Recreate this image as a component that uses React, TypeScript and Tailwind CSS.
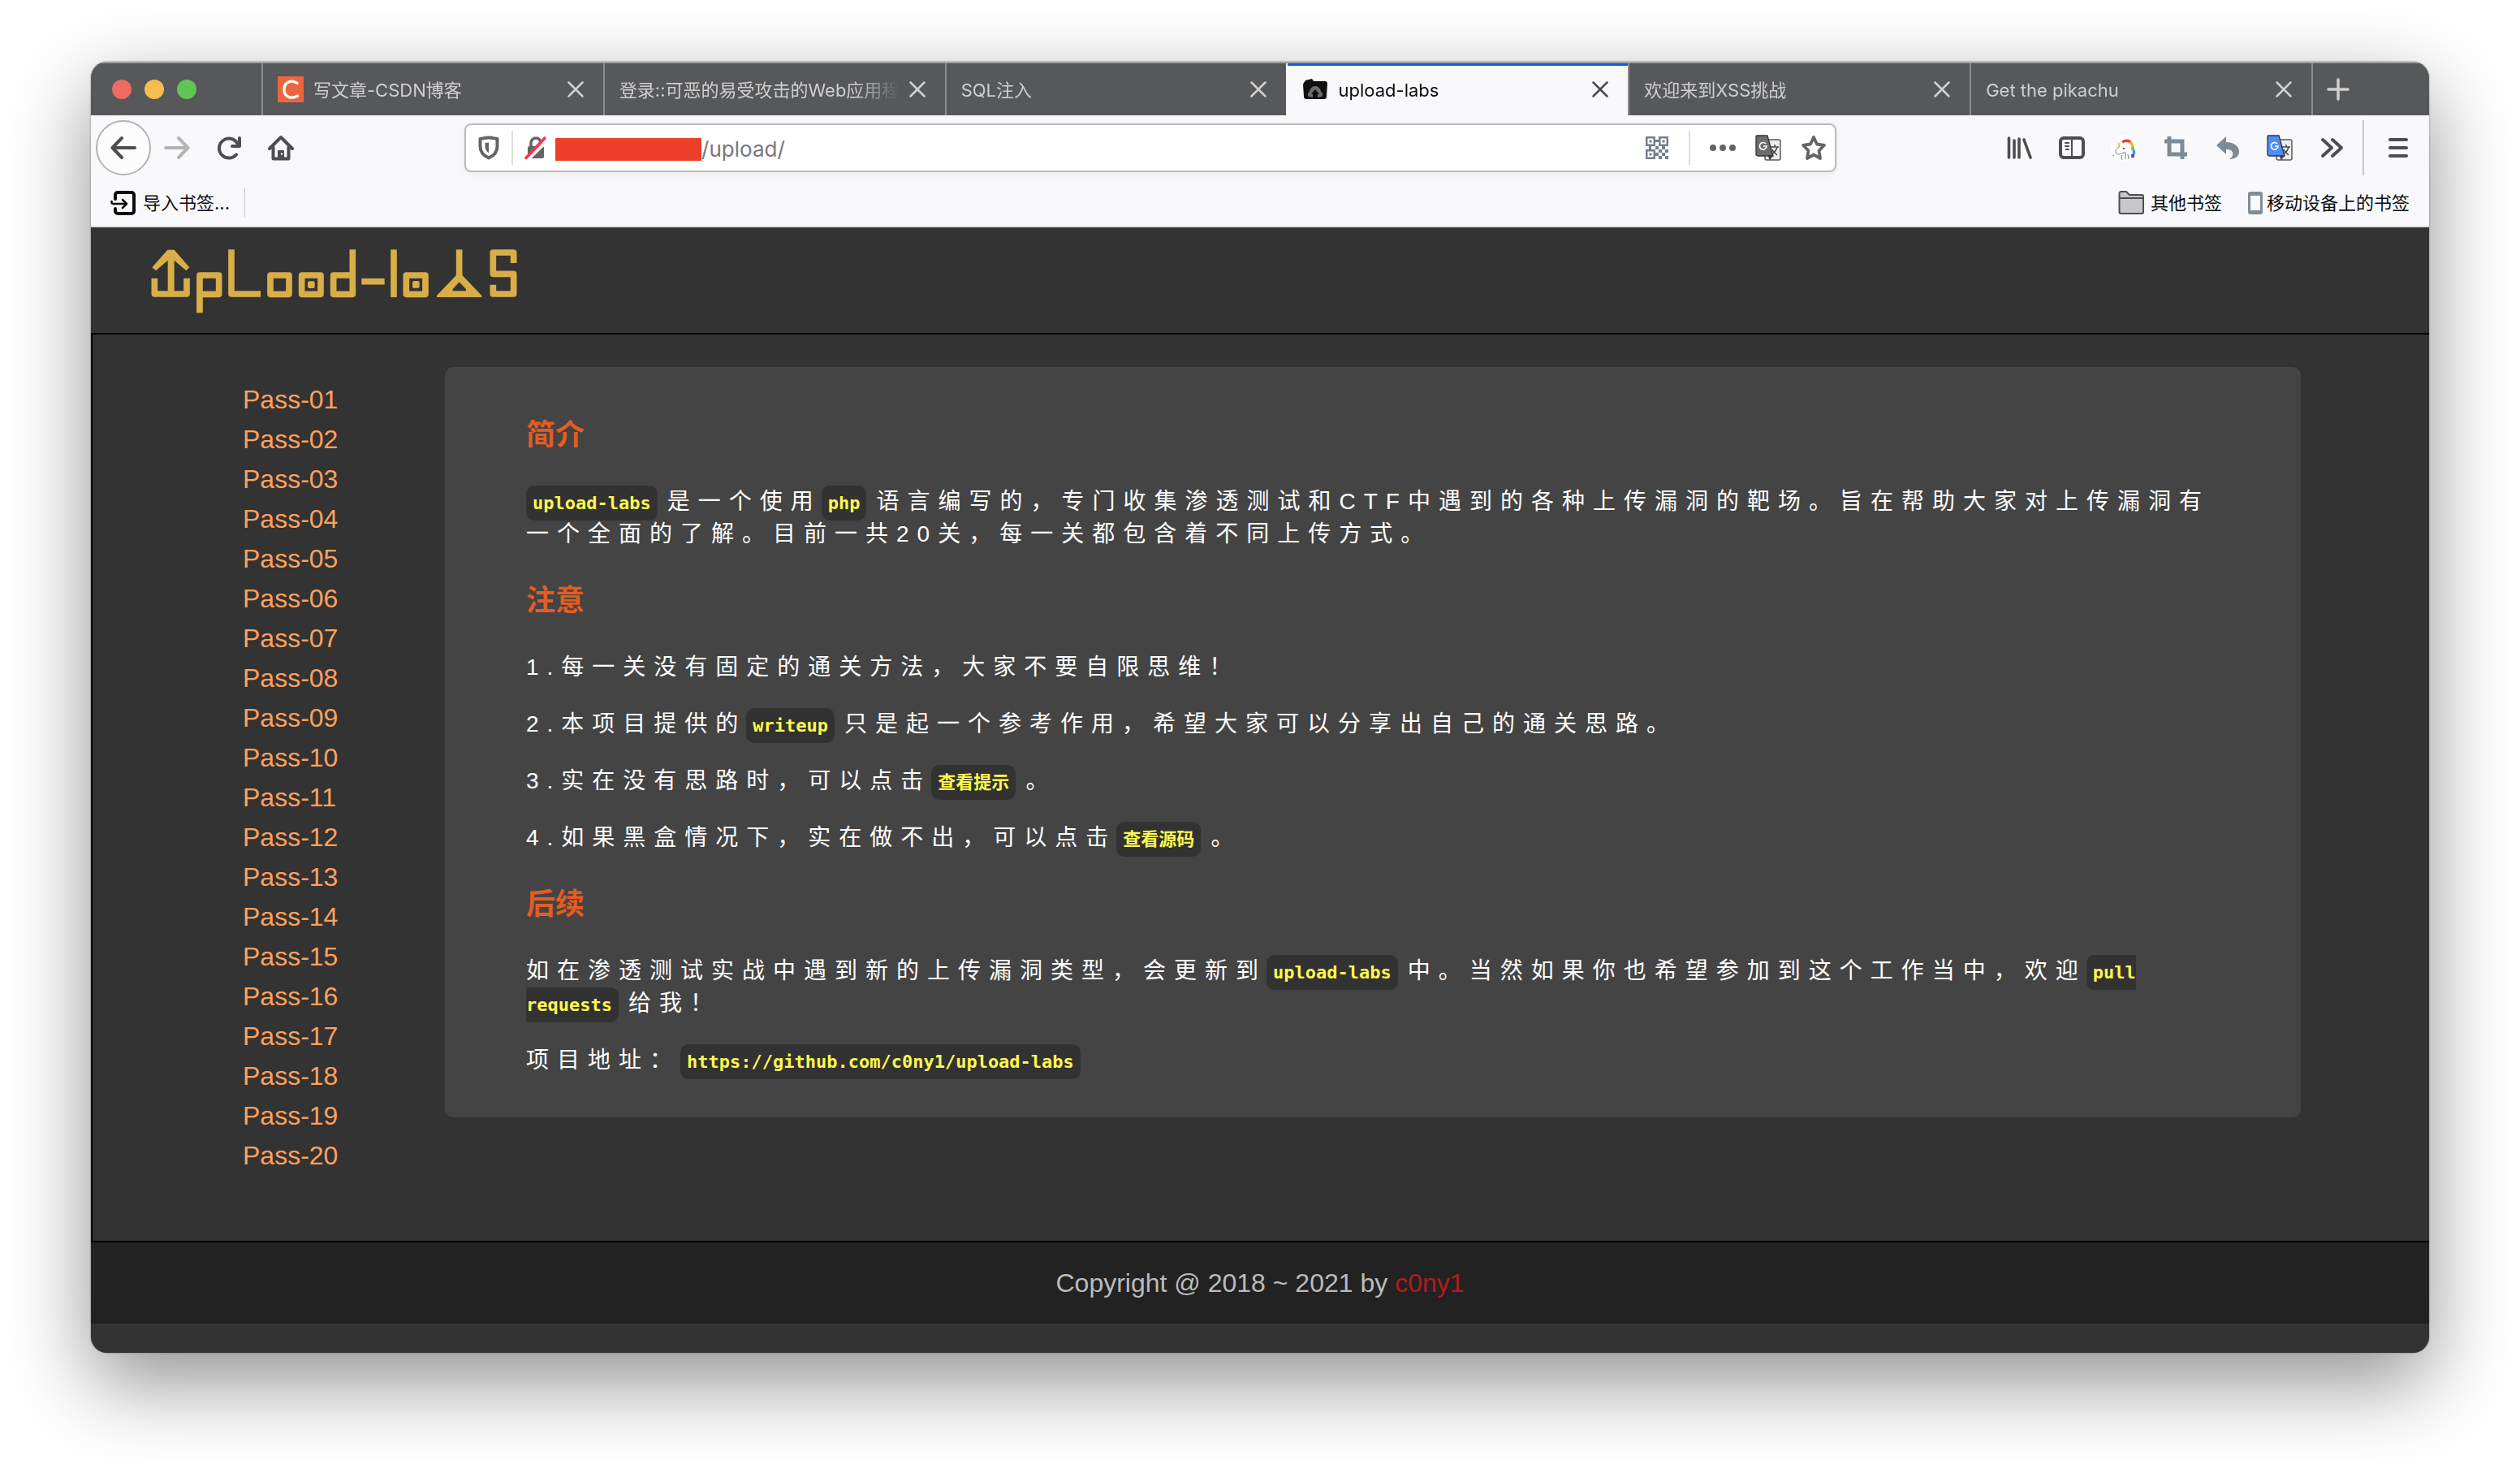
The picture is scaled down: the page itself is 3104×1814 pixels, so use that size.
import type { ReactNode } from 'react'

type Tab = {
  title: string
  icon?: ReactNode
  active?: boolean
}

const passes = Array.from({ length: 20 }, (_, i) => `Pass-${String(i + 1).padStart(2, '0')}`)

const CsdnIcon = () => (
  <svg viewBox="0 0 32 32" className="size-8 shrink-0">
    <rect width="32" height="32" fill="#ec6541" />
    <path d="M24 8.500C17 3.500 8 7 8 16.500c0 9 9 12 16.500 7.500" fill="none" stroke="#fff" strokeWidth="3.400" strokeLinecap="round" />
  </svg>
)

const FolderUploadIcon = () => (
  <svg viewBox="0 0 32 32" className="size-8 shrink-0">
    <path d="M2 8 4 5l8-2 2 3h14a3 3 0 0 1 3 3l-1 16a3 3 0 0 1-3 3H5a3 3 0 0 1-3-3L1 10z" fill="#111" />
    <path d="M8 25c-2-2-1-5 1-6 0-3 3-7 7-7s7 4 7 7c2 1 3 4 1 6l-5 1v-4h2l-5-6-5 6h2v4z" fill="#6d6d6d" />
  </svg>
)

const tabs: Tab[] = [
  { title: '写文章-CSDN博客', icon: <CsdnIcon /> },
  { title: '登录::可恶的易受攻击的Web应用程序' },
  { title: 'SQL注入' },
  { title: 'upload-labs', icon: <FolderUploadIcon />, active: true },
  { title: '欢迎来到XSS挑战' },
  { title: 'Get the pikachu' },
]

type IconProps = {
  children: ReactNode
  className?: string
}

const Icon = ({ children, className = '' }: IconProps) => (
  <svg
    viewBox="0 0 32 32"
    fill="none"
    stroke="currentColor"
    strokeWidth="4"
    strokeLinecap="round"
    strokeLinejoin="round"
    className={`size-8 shrink-0 ${className}`}
  >
    {children}
  </svg>
)

const NavButton = ({ label, children }: { label: string; children: ReactNode }) => (
  <button aria-label={label} className="flex h-16 w-16 shrink-0 items-center justify-center">
    {children}
  </button>
)

const TranslateIcon = ({ front, tail }: { front: string; tail: string }) => (
  <svg viewBox="0 0 32 32" className="size-8 shrink-0">
    <rect x="12" y="6" width="19" height="25" rx="2" fill="#ececec" stroke="#5b5b5d" strokeWidth="1.500" />
    <path d="M19 15h10M24 12v3M27 15c-1 4-3 7-7 9M21 18c1 3 4 5 6 7" fill="none" stroke="#444" strokeWidth="1.500" />
    <path d="M16 25h6l-4 5.500z" fill={tail} stroke="#333" />
    <path d="M2 1h13l7 25H3a2 2 0 0 1-2-2V2a1 1 0 0 1 1-1z" fill={front} stroke="#333" strokeWidth="1.300" />
    <path d="M13 11a4.300 4.300 0 1 0 1 3h-4" fill="none" stroke="#fff" strokeWidth="1.600" />
  </svg>
)

const QrIcon = () => (
  <svg viewBox="0 0 28 28" className="size-7" fill="#74818d">
    <path
      fillRule="evenodd"
      d="M0 0h12v12H0zM2.500 2.500v7h7v-7zM16 0h12v12H16zM18.500 2.500v7h7v-7zM0 16h12v12H0zM2.500 18.500v7h7v-7z"
    />
    <path d="M4.500 4.500h3v3h-3zM20.500 4.500h3v3h-3zM4.500 20.500h3v3h-3zM12 4h4v3h-4zM4 12h3v4H4zM12 12h4v4h-4zM20 12h4v4h-4zM16 16h4v4h-4zM24 16h4v4h-4zM12 20h4v4h-4zM20 20h4v4h-4zM16 24h4v4h-4zM24 24h4v4h-4z" />
  </svg>
)

const UnicornIcon = () => (
  <svg viewBox="0 0 32 32" className="size-8">
    <circle cx="16" cy="16" r="16" fill="#fff" />
    <g fill="none" strokeWidth="3.500">
      <path d="M14 9c4-2 8-2 10 0" stroke="#ee3b2e" />
      <path d="M24 9c2 2 3 3 3 6" stroke="#f5b623" />
      <path d="M27 15v4" stroke="#5ac83c" />
      <path d="M28 19c1 2 1 3 0 5" stroke="#2f9df0" />
      <path d="M27 24v4" stroke="#5a2fc0" />
    </g>
    <path d="m8 9 4 2-2 4z" fill="#f0cf3a" />
    <path d="M11 14c-3 2-6 5-5 8 2 3 6 2 9 0l3 0c1 3-1 5 0 8M14 25c-1 2-1 4 0 6M21 24l1 6M2 25l2 1" fill="none" stroke="#777" />
    <circle cx="16" cy="17" r="1" fill="#222" />
  </svg>
)

const TabBar = () => (
  <div className="flex h-[66px] border-t-2 border-[#9d9e9f] bg-[#57585a]">
    <div className="flex w-[210px] shrink-0 items-center gap-4 pl-[26px]">
      <button aria-label="关闭" className="size-6 rounded-full bg-[#ed6b60]" />
      <button aria-label="最小化" className="size-6 rounded-full bg-[#f6be50]" />
      <button aria-label="缩放" className="size-6 rounded-full bg-[#61c555]" />
    </div>
    <div role="tablist" className="flex min-w-0 flex-1">
      {tabs.map((tab) => (
        <div
          key={tab.title}
          role="tab"
          aria-selected={!!tab.active}
          className={`flex min-w-0 flex-1 basis-0 items-center gap-3 border-l-2 pr-6 pl-[18px] ${
            tab.active
              ? 'border-[#f9f9fb] bg-[#f9f9fb] text-[#0c0c0d] shadow-[inset_0_3px_0_#0a60df]'
              : 'border-[#8b8c8d] text-[#cfcfd0]'
          }`}
        >
          {tab.icon}
          <span className="min-w-0 flex-1 overflow-hidden pt-0.5 text-[22px] leading-8 whitespace-nowrap [mask-image:linear-gradient(to_right,black_calc(100%-56px),transparent)]">
            {tab.title}
          </span>
          <button aria-label="关闭标签页" className={tab.active ? 'text-[#4a4a4c]' : 'text-[#d0d0d1]'}>
            <svg viewBox="0 0 20 20" className="size-5" stroke="currentColor" strokeWidth="2.500" strokeLinecap="round">
              <path d="m1.500 1.500 17 17M18.500 1.500l-17 17" />
            </svg>
          </button>
        </div>
      ))}
    </div>
    <div className="flex w-[145px] shrink-0 items-center border-l-2 border-[#8b8c8d] pl-[17px]">
      <button aria-label="新建标签页" className="text-[#d0d0d1]">
        <svg viewBox="0 0 28 28" className="size-7" stroke="currentColor" strokeWidth="3.500" strokeLinecap="round">
          <path d="M14 2v24M2 14h24" />
        </svg>
      </button>
    </div>
  </div>
)

const UrlBar = () => (
  <div className="flex h-[60px] min-w-0 flex-60 items-center rounded-lg border-2 border-[#bbbbbc] bg-white pr-[10px] pl-3 text-[#646466] shadow-[0_2px_8px_rgba(0,0,0,0.06)]">
    <Icon>
      <path d="M16 3.500c4 0 7 1 10.500 1.500V14c0 7-4.500 12-10.500 14.500C10 26 5.500 21 5.500 14V5C9 4.500 12 3.500 16 3.500z" />
      <path d="M16 9.500v13c-3-2-4.500-5-4.500-8.500v-4z" fill="currentColor" stroke="none" />
    </Icon>
    <div className="mx-3 h-[42px] w-0.5 bg-[#dededf]" />
    <Icon className="mr-2">
      <path d="M10 14v-4a6 6 0 0 1 12 0v4" strokeWidth="3.500" />
      <rect x="6" y="14" width="20" height="15" rx="2" fill="currentColor" stroke="none" />
      <path d="M6 31 30 7" stroke="#fff" strokeWidth="4" />
      <path d="M4 28.500 27 4" stroke="#ff3347" strokeWidth="3.500" />
    </Icon>
    <div className="flex min-w-0 flex-1 items-center pt-1">
      <div className="h-7 w-[180px] shrink-0 bg-[#ec4128]" />
      <input
        aria-label="地址"
        defaultValue="/upload/"
        className="min-w-0 flex-1 bg-transparent text-[26px] leading-8 text-[#77777a] outline-none"
      />
    </div>
    <button aria-label="二维码" className="mr-[25px]">
      <QrIcon />
    </button>
    <div className="mr-6 h-[42px] w-0.5 bg-[#dededf]" />
    <div className="flex items-center gap-6">
      <button aria-label="页面操作">
        <Icon>
          <g fill="currentColor" stroke="none">
            <circle cx="4" cy="16" r="4" />
            <circle cx="16" cy="16" r="4" />
            <circle cx="28" cy="16" r="4" />
          </g>
        </Icon>
      </button>
      <button aria-label="翻译此页">
        <TranslateIcon front="#6c6c6e" tail="#444" />
      </button>
      <button aria-label="加入书签">
        <Icon>
          <path d="m16 3 4 8.500 9 1.300-6.500 6.700L24 29l-8-4.500L8 29l1.500-9.500L3 12.800l9-1.300z" strokeWidth="3.800" />
        </Icon>
      </button>
    </div>
  </div>
)

const Toolbar = () => (
  <div className="flex h-20 items-center pr-[6px] pl-[6px] text-[#4e4e50]">
    <button
      aria-label="后退"
      className="flex size-[68px] shrink-0 items-center justify-center rounded-full border-2 border-[#b3b3b4] bg-[#fcfcfd]"
    >
      <Icon>
        <path d="M30 16H3M14 4 2.500 16 14 28" />
      </Icon>
    </button>
    <NavButton label="前进">
      <Icon className="text-[#b4b4b5]">
        <path d="M2 16h27M18 4l11.500 12L18 28" />
      </Icon>
    </NavButton>
    <NavButton label="刷新">
      <Icon>
        <path d="M25 24.500A12 12 0 1 1 26 10" />
        <path d="M20 14h9V4" />
      </Icon>
    </NavButton>
    <NavButton label="主页">
      <Icon>
        <path d="M2 17 16 3l14 14M6.500 15v14.500h19V15" />
        <path d="M12 30V20a1 1 0 0 1 1-1h6a1 1 0 0 1 1 1v10z" fill="currentColor" stroke="none" />
        <circle cx="17" cy="23.500" r="1.200" fill="#f9f9fb" stroke="none" />
      </Icon>
    </NavButton>
    <div className="flex-7" />
    <UrlBar />
    <div className="flex-7" />
    <NavButton label="书签库">
      <Icon>
        <path d="M2.500 4v24M9 7v21M15 5v23M21 6l8 22" strokeWidth="3.600" />
      </Icon>
    </NavButton>
    <NavButton label="侧栏">
      <Icon>
        <rect x="2" y="4" width="28" height="24" rx="4" />
        <path d="M16 5v22" strokeWidth="2" />
        <path d="M8 10h4M8 14h4M9 18h3" strokeWidth="2" />
      </Icon>
    </NavButton>
    <NavButton label="独角兽">
      <UnicornIcon />
    </NavButton>
    <NavButton label="截图">
      <Icon className="text-[#7e8a96]">
        <path d="M2 8h22v22M8 2v22h22" strokeWidth="5" strokeLinecap="butt" strokeLinejoin="miter" />
      </Icon>
    </NavButton>
    <NavButton label="撤销">
      <Icon className="text-[#7e8a96]">
        <path d="M14 2v7c8 0 16 4 16 12 0 5-4 9-13 9 8-3 7-13-3-12v6L2 13z" fill="currentColor" stroke="none" />
      </Icon>
    </NavButton>
    <NavButton label="谷歌翻译">
      <TranslateIcon front="#4f8cf7" tail="#2f5bb8" />
    </NavButton>
    <NavButton label="更多工具">
      <Icon>
        <path d="m5 6 11 10L5 26M17 6l11 10-11 10" />
      </Icon>
    </NavButton>
    <div className="mr-[10px] ml-[6px] h-[68px] w-0.5 bg-[#c9c9ca]" />
    <NavButton label="打开菜单">
      <Icon>
        <path d="M6 6h20M6 16h20M6 26h20" />
      </Icon>
    </NavButton>
  </div>
)

const BookmarkBar = () => (
  <div className="flex h-[58px] items-center border-b-2 border-[#e0e0e1] pr-6 pl-6 text-[22px] leading-8 text-[#0c0c0d]">
    <button className="flex items-center gap-2">
      <Icon>
        <path d="M6 11V6a3 3 0 0 1 3-3h17a3 3 0 0 1 3 3v20a3 3 0 0 1-3 3H9a3 3 0 0 1-3-3v-3" />
        <path d="M1.500 14v1a2 2 0 0 0 2 2H19M15 12l5 5-5 5" strokeWidth="2.500" />
      </Icon>
      导入书签...
    </button>
    <div className="ml-[18px] h-9 w-px bg-[#c9c9ca]" />
    <button className="ml-auto flex items-center gap-2">
      <Icon className="text-[#4e4e50]">
        <path d="M1.500 27V4a2 2 0 0 1 2-2H10l4 4h15a2 2 0 0 1 2 2v19a2 2 0 0 1-2 2H3.500a2 2 0 0 1-2-2z" fill="#c8c8ca" strokeWidth="2" />
        <path d="M2 10h28" strokeWidth="2" />
      </Icon>
      其他书签
    </button>
    <button className="ml-[31px] flex items-center gap-1">
      <svg viewBox="0 0 20 32" className="h-8 w-5">
        <rect x="1" y="2" width="18" height="28" rx="3" fill="#828c96" />
        <rect x="4" y="7" width="12" height="18" fill="#fafafa" />
      </svg>
      移动设备上的书签
    </button>
  </div>
)

const Logo = () => (
  <svg
    role="img"
    aria-label="upload-labs"
    viewBox="0 0 1410 330"
    className="h-[110px] w-[470px]"
    fill="none"
    stroke="#d9ae49"
    strokeWidth="23"
    strokeLinejoin="round"
  >
    {/* arrow in a tray */}
    <polygon points="79,53 104,53 160,118 148,130 104,92 104,206 80,206 80,92 36,130 22,118" fill="#d9ae49" stroke="none" />
    <polyline points="31,158 31,216 150,216 150,158" />
    <polyline points="198,286 198,147 269,147 269,217 198,217" />
    <polyline points="315,52 315,216 423,216" />
    <rect x="459" y="147" width="69" height="70" />
    <rect x="575" y="147" width="70" height="70" />
    <rect x="597" y="169" width="26" height="26" rx="6" fill="#d9ae49" stroke="none" />
    <polyline points="763,52 763,217 692,217 692,147 763,147" />
    <line x1="796" y1="170" x2="881" y2="170" />
    <line x1="915" y1="52" x2="915" y2="228" />
    <rect x="961" y="147" width="71" height="70" />
    <rect x="984" y="168" width="26" height="26" rx="6" fill="#d9ae49" stroke="none" />
    {/* flask */}
    <line x1="1157" y1="52" x2="1157" y2="160" />
    <path
      fillRule="evenodd"
      d="M1145 148h24l71 74v6h-166v-6zM1157 172l-24 26v7h49v-7z"
      fill="#d9ae49"
      stroke="none"
    />
    <polyline points="1358,102 1358,63 1282,63 1282,142 1358,142 1358,216 1282,216 1282,182" />
  </svg>
)

const Code = ({ children }: { children: ReactNode }) => (
  <code className="mr-3 rounded-[10px] bg-[#323232] px-2 py-[9px] font-['DejaVu_Sans_Mono','Noto_Sans_CJK_SC',monospace] text-[22px] leading-6 font-bold tracking-normal text-[#fff84e]">
    {children}
  </code>
)

const Section = ({ title, children }: { title: string; children: ReactNode }) => (
  <section>
    <h3 className="mb-[42px] text-4xl leading-10 font-bold text-[#e45c21]">{title}</h3>
    <div className="flex flex-col gap-[30px] text-[28px] leading-10 tracking-[10px] text-white">{children}</div>
  </section>
)

const App = () => {
  return (
    <div lang="zh-CN" className="min-h-screen bg-white px-28 pt-[76px] pb-[148px] font-['Inter','Noto_Sans_CJK_SC',sans-serif]">
      <div className="overflow-hidden rounded-[20px] bg-[#333] shadow-[0_0_2px_rgba(0,0,0,0.5),0_36px_100px_rgba(0,0,0,0.44)]">
        <div className="bg-[#f9f9fb]">
          <TabBar />
          <Toolbar />
          <BookmarkBar />
        </div>

        <div className="font-['Liberation_Sans','Noto_Sans_CJK_SC',sans-serif]">
          <header className="h-[130px] pt-[10px] pl-[68px]">
            <Logo />
          </header>

          <main className="flex items-start border-2 border-r-0 border-black pr-[158px]">
            <nav className="w-[434px] shrink-0 pt-14 pb-20 pl-[185px]">
              <ul className="text-[32px] leading-[49px] text-[#ffa15e]">
                {passes.map((pass) => (
                  <li key={pass}>
                    <a href={`#${pass}`}>{pass}</a>
                  </li>
                ))}
              </ul>
            </nav>

            <article className="mt-10 flex min-w-0 flex-1 flex-col gap-[42px] rounded-[10px] bg-[#444] px-[100px] pt-16 pb-[50px]">
              <Section title="简介">
                <p>
                  <Code>upload-labs</Code>是一个使用<Code>php</Code>
                  语言编写的，专门收集渗透测试和CTF中遇到的各种上传漏洞的靶场。旨在帮助大家对上传漏洞有一个全面的了解。目前一共20关，每一关都包含着不同上传方式。
                </p>
              </Section>
              <Section title="注意">
                <p>1.每一关没有固定的通关方法，大家不要自限思维！</p>
                <p>
                  2.本项目提供的<Code>writeup</Code>只是起一个参考作用，希望大家可以分享出自己的通关思路。
                </p>
                <p>
                  3.实在没有思路时，可以点击<Code>查看提示</Code>。
                </p>
                <p>
                  4.如果黑盒情况下，实在做不出，可以点击<Code>查看源码</Code>。
                </p>
              </Section>
              <Section title="后续">
                <p>
                  如在渗透测试实战中遇到新的上传漏洞类型，会更新到<Code>upload-labs</Code>
                  中。当然如果你也希望参加到这个工作当中，欢迎<Code>pull requests</Code>给我！
                </p>
                <p>
                  项目地址：<Code>https://github.com/c0ny1/upload-labs</Code>
                </p>
              </Section>
            </article>
          </main>

          <footer className="mb-9 bg-[#222] py-[26px] text-center text-[32px] leading-[48px] text-[#bbb]">
            Copyright @ 2018 ~ 2021 by{' '}
            <a href="#c0ny1" className="text-[#b01c1c]">
              c0ny1
            </a>
          </footer>
        </div>
      </div>
    </div>
  )
}
export default App
